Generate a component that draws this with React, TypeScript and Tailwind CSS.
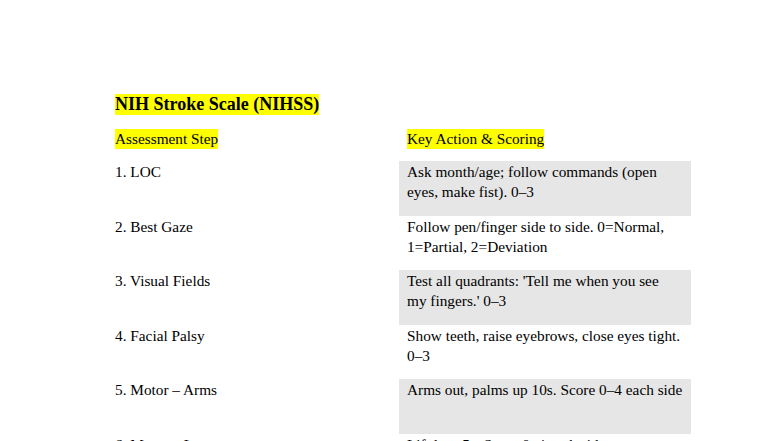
const rows: [string, string[]][] = [
  ["1. LOC", ["Ask month/age; follow commands (open", "eyes, make fist). 0–3"]],
  ["2. Best Gaze", ["Follow pen/finger side to side. 0=Normal,", "1=Partial, 2=Deviation"]],
  ["3. Visual Fields", ["Test all quadrants: 'Tell me when you see", "my fingers.' 0–3"]],
  ["4. Facial Palsy", ["Show teeth, raise eyebrows, close eyes tight.", "0–3"]],
  ["5. Motor – Arms", ["Arms out, palms up 10s. Score 0–4 each side"]],
  ["6. Motor – Legs", ["Lift legs 5s. Score 0–4 each side"]],
  ["7. Limb Ataxia", ["Finger-nose, heel-shin tests. 0–2"]],
];

export default function App() {
  return (
    <div className="min-h-screen bg-white pl-[107px] pt-[93px] font-['Liberation_Serif',serif] text-black">
      {/* Title */}
      <div className="px-2">
        <span className="inline-block bg-[#ffff00] text-[18px] font-bold leading-[21px]">
          NIH Stroke Scale (NIHSS)
        </span>
      </div>

      {/* Header */}
      <div className="mt-[12px] grid w-[584px] grid-cols-2 text-[15.3px] leading-[20px]">
        <div className="px-2">
          <span className="inline-block bg-[#ffff00]">Assessment Step</span>
        </div>
        <div className="px-2">
          <span className="inline-block bg-[#ffff00]">Key Action &amp; Scoring</span>
        </div>
      </div>

      {/* Rows */}
      <div className="mt-[12px] grid w-[584px] grid-cols-2 text-[15.3px] leading-[20px]">
        {rows.map(([step, lines], i) => (
          <div key={step} className="contents">
            <div className="h-[54.6px] px-2 pt-px">{step}</div>
            <div className={`h-[54.6px] px-2 pt-px whitespace-nowrap ${i % 2 === 0 ? "bg-[#e6e6e6]" : ""}`}>
              {lines.map((l) => (
                <div key={l}>{l}</div>
              ))}
            </div>
          </div>
        ))}
      </div>
    </div>
  );
}
